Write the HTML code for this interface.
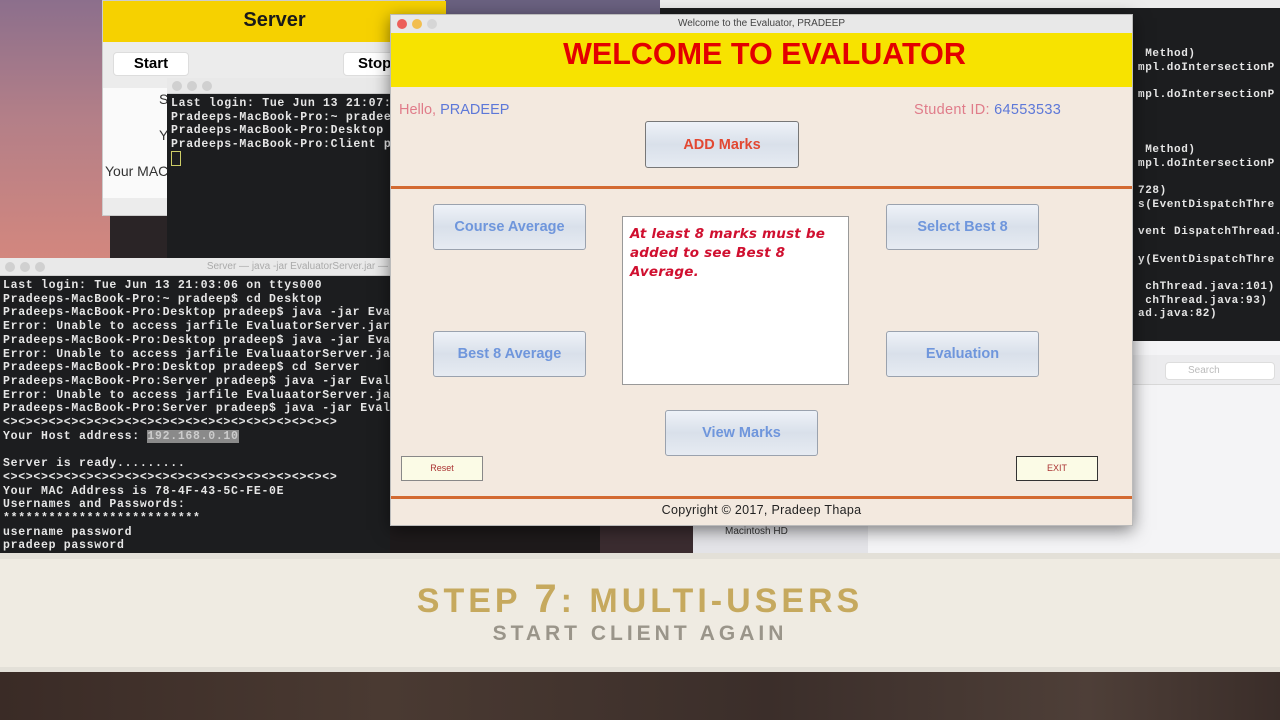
<!DOCTYPE html>
<html><head><meta charset="utf-8"><style>
*{margin:0;padding:0;box-sizing:border-box}
body{width:1280px;height:720px;overflow:hidden;position:relative;background:#2a2426;font-family:"Liberation Sans",sans-serif}
.abs{position:absolute}
.term{background:#1c1d1f;color:#e6e6e6;font-family:"Liberation Mono",monospace;font-size:11.5px;font-weight:bold;letter-spacing:0.7px;line-height:13.7px;white-space:pre;overflow:hidden}
.tb{background:#e9e9e9;border-bottom:1px solid #cfcfcf}
.dot{position:absolute;width:10px;height:10px;border-radius:50%;background:#d0d0d0}
.btn{position:absolute;border:1px solid #9aa2ae;border-radius:3px;background:linear-gradient(#eef2f8,#d9e0ea 50%,#e6ebf2);font-weight:bold;font-size:14.5px;color:#6f96dc;display:flex;align-items:center;justify-content:center}
</style></head><body>
<div class="abs" style="left:0;top:0;width:110px;height:260px;background:linear-gradient(180deg,#8c6f8c 0%,#b37f88 45%,#d3877e 100%)"></div>
<div class="abs" style="left:445px;top:0;width:220px;height:14px;background:#6a6180"></div>
<div class="abs" style="left:390px;top:520px;width:310px;height:35px;background:#1e1a1b"></div>
<div class="abs" style="left:600px;top:525px;width:95px;height:30px;background:#3b2c30"></div>
<div class="abs" style="left:660px;top:0;width:620px;height:8px;background:#ececec"></div>
<div class="abs term" style="left:660px;top:8px;width:620px;height:333px;padding:40px 0 0 478px;font-size:11px;letter-spacing:0.6px"> Method)
mpl.doIntersectionP

mpl.doIntersectionP



 Method)
mpl.doIntersectionP

728)
s(EventDispatchThre

vent DispatchThread.

y(EventDispatchThre

 chThread.java:101)
 chThread.java:93)
ad.java:82)</div>
<div class="abs" style="left:693px;top:341px;width:587px;height:214px;background:#f4f4f6"></div>
<div class="abs" style="left:1133px;top:355px;width:147px;height:30px;background:#ececee;border-bottom:1px solid #d8d8d8"></div>
<div class="abs" style="left:1165px;top:362px;width:110px;height:18px;background:#fff;border:1px solid #ddd;border-radius:4px;font-size:10px;color:#bbb;padding:2px 0 0 22px">Search</div>
<div class="abs" style="left:693px;top:520px;width:175px;height:35px;background:#e4e4e8;font-size:10px;color:#333;padding:6px 0 0 32px">Macintosh HD</div>
<div class="abs" style="left:102px;top:0;width:343px;height:216px;background:#ececec;border:1px solid #ccc">
 <div class="abs" style="left:0;top:0;width:343px;height:41px;background:#f6d100"></div>
 <div class="abs" style="left:0;top:8px;width:343px;text-align:center;font-size:20px;font-weight:bold;color:#1a1a1a">Server</div>
 <div class="abs" style="left:10px;top:51px;width:76px;height:24px;background:#fff;border:1px solid #ddd;border-radius:4px;font-size:15px;font-weight:bold;text-align:center;line-height:22px">Start</div>
 <div class="abs" style="left:240px;top:51px;width:76px;height:24px;background:#fff;border:1px solid #ddd;border-radius:4px;font-size:15px;font-weight:bold;padding-left:14px;line-height:22px">Stop</div>
 <div class="abs" style="left:0;top:87px;width:343px;height:110px;background:#fafafa"></div>
 <div class="abs" style="left:56px;top:90px;font-size:14px;color:#333">S</div>
 <div class="abs" style="left:56px;top:126px;font-size:14px;color:#333">Y</div>
 <div class="abs" style="left:2px;top:162px;font-size:14px;color:#333">Your MAC</div>
</div>
<div class="abs tb" style="left:167px;top:78px;width:223px;height:16px"><span class="dot" style="left:5px;top:3px"></span><span class="dot" style="left:20px;top:3px"></span><span class="dot" style="left:35px;top:3px"></span></div>
<div class="abs term" style="left:167px;top:94px;width:223px;height:164px;padding:3px 0 0 4px">Last login: Tue Jun 13 21:07:
Pradeeps-MacBook-Pro:~ pradee
Pradeeps-MacBook-Pro:Desktop 
Pradeeps-MacBook-Pro:Client p
<span style="border:1px solid #cc6">&nbsp;</span></div>
<div class="abs tb" style="left:0;top:258px;width:390px;height:18px;font-size:10px;color:#aaa;text-align:right;padding:3px 2px 0 0">Server — java -jar EvaluatorServer.jar —<span class="dot" style="left:5px;top:4px"></span><span class="dot" style="left:20px;top:4px"></span><span class="dot" style="left:35px;top:4px"></span></div>
<div class="abs term" style="left:0;top:276px;width:390px;height:278px;padding:3px 0 0 3px">Last login: Tue Jun 13 21:03:06 on ttys000
Pradeeps-MacBook-Pro:~ pradeep$ cd Desktop
Pradeeps-MacBook-Pro:Desktop pradeep$ java -jar Eva
Error: Unable to access jarfile EvaluatorServer.jar
Pradeeps-MacBook-Pro:Desktop pradeep$ java -jar Eva
Error: Unable to access jarfile EvaluaatorServer.ja
Pradeeps-MacBook-Pro:Desktop pradeep$ cd Server
Pradeeps-MacBook-Pro:Server pradeep$ java -jar Eval
Error: Unable to access jarfile EvaluaatorServer.ja
Pradeeps-MacBook-Pro:Server pradeep$ java -jar Eval
&lt;&gt;&lt;&gt;&lt;&gt;&lt;&gt;&lt;&gt;&lt;&gt;&lt;&gt;&lt;&gt;&lt;&gt;&lt;&gt;&lt;&gt;&lt;&gt;&lt;&gt;&lt;&gt;&lt;&gt;&lt;&gt;&lt;&gt;&lt;&gt;&lt;&gt;&lt;&gt;&lt;&gt;&lt;&gt;
Your Host address: <span style="background:#8a8a8a;color:#ccc">192.168.0.10</span>

Server is ready.........
&lt;&gt;&lt;&gt;&lt;&gt;&lt;&gt;&lt;&gt;&lt;&gt;&lt;&gt;&lt;&gt;&lt;&gt;&lt;&gt;&lt;&gt;&lt;&gt;&lt;&gt;&lt;&gt;&lt;&gt;&lt;&gt;&lt;&gt;&lt;&gt;&lt;&gt;&lt;&gt;&lt;&gt;&lt;&gt;
Your MAC Address is 78-4F-43-5C-FE-0E
Usernames and Passwords:
**************************
username password
pradeep password</div>
<div class="abs" style="left:390px;top:14px;width:743px;height:512px;background:#f3e9df;border:1px solid #bbb;box-shadow:0 4px 16px rgba(0,0,0,.5)">
 <div class="abs" style="left:0;top:0;width:741px;height:18px;background:#e8e8e8;font-size:10px;color:#444;text-align:center;line-height:18px">Welcome to the Evaluator, PRADEEP
  <span class="dot" style="left:6px;top:4px;background:#ec5f5a"></span><span class="dot" style="left:21px;top:4px;background:#f2be4f"></span><span class="dot" style="left:36px;top:4px;background:#d6d6d6"></span></div>
 <div class="abs" style="left:0;top:18px;width:741px;height:54px;background:#f7e300;color:#e30000;font-weight:bold;font-size:30.5px;text-align:center;line-height:42px;padding-left:6px">WELCOME TO EVALUATOR</div>
 <div class="abs" style="left:8px;top:87px;font-size:14.5px;color:#e07c8a">Hello, <span style="color:#5d78d8">PRADEEP</span></div>
 <div class="abs" style="left:523px;top:87px;font-size:14.5px;color:#e07c8a;letter-spacing:.3px">Student ID: <span style="color:#5d78d8">64553533</span></div>
 <div class="btn" style="left:254px;top:106px;width:154px;height:47px;color:#e24832;border-color:#777">ADD Marks</div>
 <div class="abs" style="left:0;top:171px;width:741px;height:3px;background:#d36a32"></div>
 <div class="btn" style="left:42px;top:189px;width:153px;height:46px">Course Average</div>
 <div class="btn" style="left:495px;top:189px;width:153px;height:46px">Select Best 8</div>
 <div class="btn" style="left:42px;top:316px;width:153px;height:46px">Best 8 Average</div>
 <div class="btn" style="left:495px;top:316px;width:153px;height:46px">Evaluation</div>
 <div class="btn" style="left:274px;top:395px;width:153px;height:46px">View Marks</div>
 <div class="abs" style="left:231px;top:201px;width:227px;height:169px;background:#fff;border:1px solid #999;padding:8px 7px;font-family:'DejaVu Sans',sans-serif;font-style:italic;font-weight:bold;font-size:13.5px;line-height:19px;color:#d01030;letter-spacing:.2px">At least 8 marks must be added to see Best 8 Average.</div>
 <div class="abs" style="left:10px;top:441px;width:82px;height:25px;border:1px solid #888;background:#fbfbe6;font-size:9px;color:#a33;text-align:center;line-height:23px">Reset</div>
 <div class="abs" style="left:625px;top:441px;width:82px;height:25px;border:1px solid #333;background:#fbfbe6;font-size:9px;color:#a33;text-align:center;line-height:23px">EXIT</div>
 <div class="abs" style="left:0;top:481px;width:741px;height:3px;background:#d36a32"></div>
 <div class="abs" style="left:0;top:488px;width:741px;text-align:center;font-size:12.5px;color:#222;letter-spacing:.3px">Copyright © 2017, Pradeep Thapa</div>
</div>
<div class="abs" style="left:0;top:553px;width:1280px;height:120px;background:#efebe2;border-top:6px solid #e3e0d8;border-bottom:6px solid #e3e0d8"></div>
<div class="abs" style="left:0;top:577px;width:1280px;text-align:center;font-size:34px;font-weight:bold;color:#c6a95e;letter-spacing:4px">STEP <span style="font-size:40px">7</span>: MULTI-USERS</div>
<div class="abs" style="left:0;top:622px;width:1280px;text-align:center;font-size:21px;font-weight:bold;color:#9a958a;letter-spacing:4px">START CLIENT AGAIN</div>
<div class="abs" style="left:0;top:672px;width:1280px;height:48px;background:linear-gradient(90deg,#3a2b26,#4a3a32 30%,#3b2e2a 60%,#4e3f38 85%,#3a2d29)"></div>
</body></html>
